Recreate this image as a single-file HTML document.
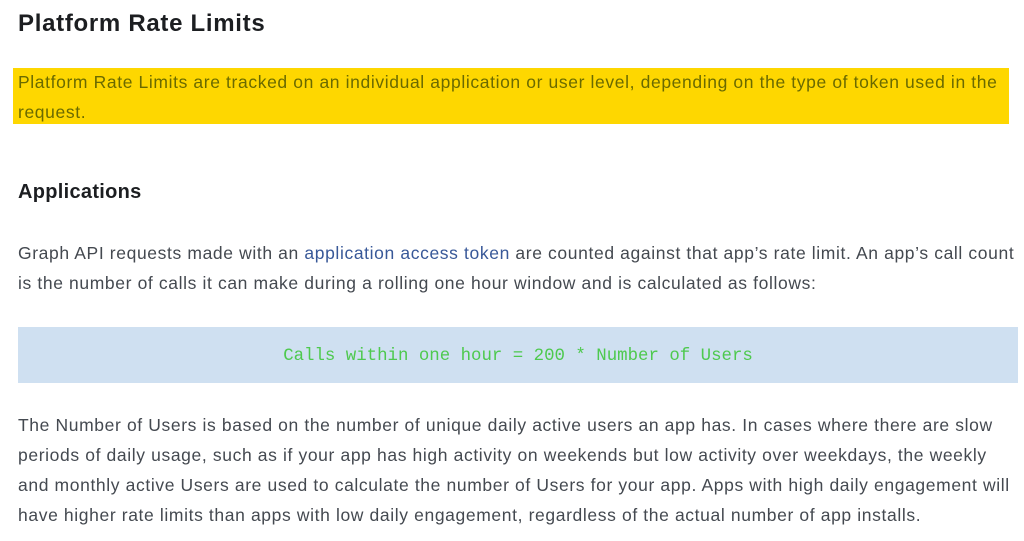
<!DOCTYPE html>
<html><head><meta charset="utf-8"><style>
body{margin:0;background:#fff;width:1024px;height:541px;overflow:hidden;font-family:"Liberation Sans",sans-serif;position:relative}
.a{position:absolute;white-space:nowrap}
h1{position:absolute;left:18px;top:10px;margin:0;font-size:24px;font-weight:bold;color:#1c1e21;letter-spacing:0.7px}
h2{position:absolute;left:18px;top:181px;margin:0;font-size:20px;font-weight:bold;color:#1c1e21;letter-spacing:0.3px}
.hl{position:absolute;left:13px;top:68px;width:996px;height:56px;background:#fed700}
.t{font-size:17.5px;color:#444950;line-height:30px;letter-spacing:0.62px}
.y{color:#6a6a00}
.code{position:absolute;left:18px;top:327px;width:1000px;height:56px;background:#cfe0f1}
.c{position:absolute;left:0;width:1000px;top:20px;text-align:center;font-family:"Liberation Mono",monospace;font-size:17.4px;color:#4ec94e}
a{color:#385898;text-decoration:none}
</style></head><body>
<h1>Platform Rate Limits</h1>
<div class="hl"></div>
<div class="a t y" style="left:18px;top:67px">Platform Rate Limits are tracked on an individual application or user level, depending on the type of token used in the<br>request.</div>
<h2>Applications</h2>
<div class="a t" style="left:18px;top:238px">Graph API requests made with an <a>application access token</a> are counted against that app’s rate limit. An app’s call count<br>is the number of calls it can make during a rolling one hour window and is calculated as follows:</div>
<div class="code"><div class="c">Calls within one hour = 200 * Number of Users</div></div>
<div class="a t" style="left:18px;top:410px">The Number of Users is based on the number of unique daily active users an app has. In cases where there are slow<br>periods of daily usage, such as if your app has high activity on weekends but low activity over weekdays, the weekly<br>and monthly active Users are used to calculate the number of Users for your app. Apps with high daily engagement will<br>have higher rate limits than apps with low daily engagement, regardless of the actual number of app installs.</div>
</body></html>
